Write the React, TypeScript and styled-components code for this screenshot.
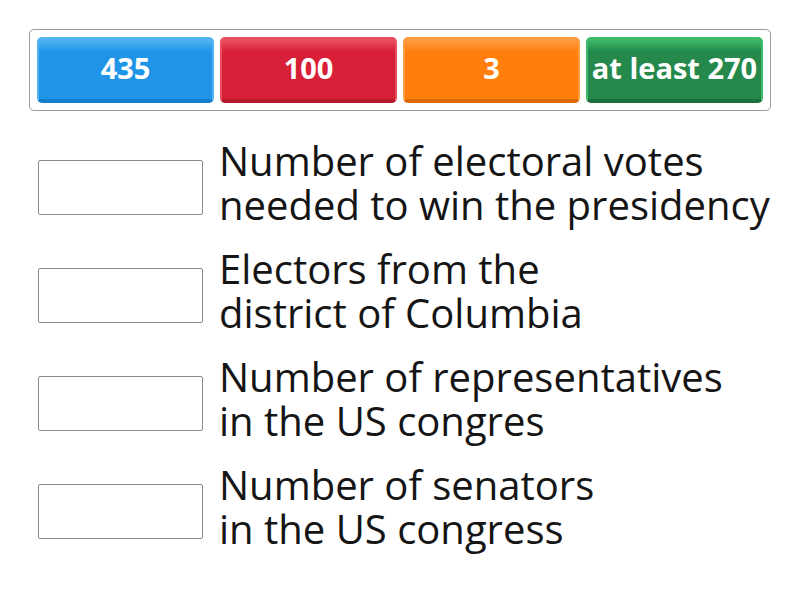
import styled, { createGlobalStyle } from 'styled-components';

const GlobalStyle = createGlobalStyle`
  html, body {
    margin: 0;
    padding: 0;
    background: #fff;
  }
  body {
    font-family: 'Open Sans', 'Noto Sans', sans-serif;
  }
`;

interface ITile {
  label: string;
  base: string;
  light: string;
  dark: string;
}

const tiles: ITile[] = [
  { label: '435', base: '#2095e8', light: '#52b3f3', dark: '#177ecc' },
  { label: '100', base: '#d71f37', light: '#e9505f', dark: '#b5172b' },
  { label: '3', base: '#ff7e0e', light: '#ff9d40', dark: '#e06804' },
  { label: 'at least 270', base: '#24894b', light: '#3dbb69', dark: '#1b6f3c' },
];

const rows = [
  ['Number of electoral votes', 'needed to win the presidency'],
  ['Electors from the', 'district of Columbia'],
  ['Number of representatives', 'in the US congres'],
  ['Number of senators', 'in the US congress'],
];

const App = () => {
  return (
    <Page>
      <GlobalStyle />
      <Tray>
        {tiles.map((t) => (
          <Tile key={t.label} $base={t.base} $light={t.light} $dark={t.dark}>
            {t.label}
          </Tile>
        ))}
      </Tray>
      <List>
        {rows.map((lines, i) => (
          <Row key={i}>
            <DropBox />
            <Prompt>
              {lines.map((l) => (
                <PromptLine key={l}>{l}</PromptLine>
              ))}
            </Prompt>
          </Row>
        ))}
      </List>
    </Page>
  );
};

const Page = styled.div`
  width: 800px;
  height: 600px;
  padding: 29px 29px 0 29px;
  box-sizing: border-box;
`;

const Tray = styled.div`
  display: grid;
  grid-template-columns: repeat(4, 1fr);
  gap: 6px;
  padding: 7px;
  border: 1px solid #9a9a9a;
  border-radius: 5px;
  height: 82px;
  box-sizing: border-box;
`;

const Tile = styled.div<{ $base: string; $light: string; $dark: string }>`
  display: flex;
  align-items: center;
  justify-content: center;
  height: 66px;
  box-sizing: border-box;
  padding-bottom: 5px;
  border-radius: 5px;
  background: linear-gradient(${(p) => p.$light} 0%, ${(p) => p.$base} 20%, ${(p) => p.$base} 100%);
  border: 2px solid ${(p) => p.$light};
  border-top-width: 3px;
  border-bottom: 4px solid ${(p) => p.$dark};
  color: #fff;
  font-weight: 700;
  font-size: 29px;
  white-space: nowrap;
  overflow: hidden;
`;

const List = styled.div`
  display: flex;
  flex-direction: column;
  gap: 53px;
  margin-top: 49px;
  padding-left: 9px;
`;

const Row = styled.div`
  display: flex;
  align-items: center;
  height: 55px;
`;

const DropBox = styled.div`
  width: 165px;
  height: 55px;
  box-sizing: border-box;
  border: 1px solid #8a8a8a;
  border-radius: 2px;
  flex-shrink: 0;
`;

const Prompt = styled.div`
  margin-left: 16px;
  font-size: 40px;
  color: #151515;
  white-space: nowrap;
  margin-top: -10px;
`;

const PromptLine = styled.div`
  height: 44px;
  line-height: 54px;
  margin-top: -5px;
  margin-bottom: 5px;
`;

export default App;
